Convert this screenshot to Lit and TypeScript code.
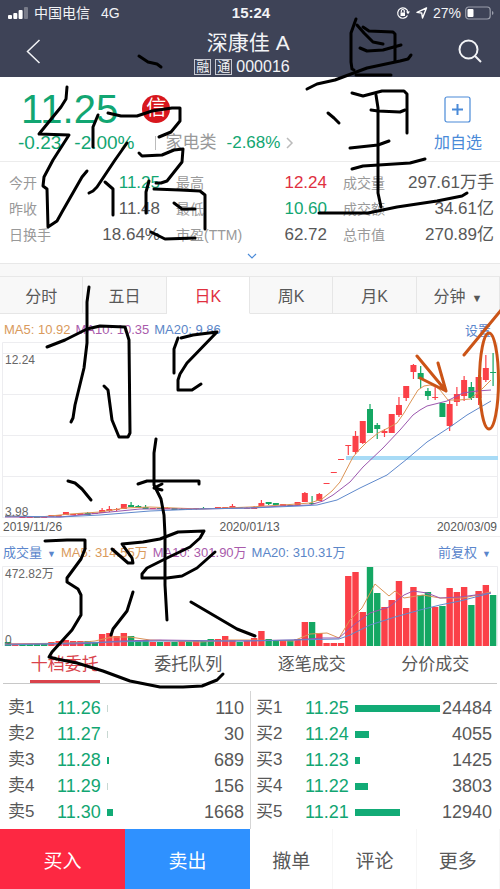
import { LitElement, html, svg, css } from "lit";
import { customElement } from "lit/decorators.js";
import { classMap } from "lit/directives/class-map.js";

type Candle = [up: number, high: number, top: number, bottom: number, low: number];

const PITCH = 7.24;
const FIRST_X = 8;

const CANDLES: Candle[] = [
  [0, 516, 516, 517, 517], [1, 516, 516, 517, 517], [1, 517, 517, 518, 518], [1, 517, 517, 518, 518],
  [0, 517, 517, 518, 518], [1, 517, 517, 518, 518], [1, 515, 515, 517, 517], [1, 515, 515, 517, 517],
  [1, 512, 512, 515, 515], [1, 514, 514, 515, 515], [1, 513, 513, 515, 515], [0, 512, 513, 515, 515],
  [1, 513, 513, 514, 514], [1, 508, 510, 513, 513], [1, 506, 509, 511, 512], [1, 508, 509, 510, 511],
  [1, 504, 504, 509, 509], [0, 502, 505, 507, 507], [0, 505, 506, 508, 508], [0, 505, 507, 509, 509],
  [1, 508, 508, 509, 509], [0, 508, 508, 509, 509], [1, 507, 508, 509, 509], [0, 508, 508, 510, 510],
  [0, 508, 509, 510, 510], [1, 509, 509, 510, 510], [1, 508, 508, 509, 510], [0, 507, 508, 509, 509],
  [0, 508, 508, 509, 509], [1, 507, 507, 508, 508], [1, 507, 507, 508, 508], [1, 504, 506, 508, 508],
  [0, 507, 507, 508, 508], [1, 507, 508, 509, 509], [1, 506, 507, 509, 509], [1, 500, 503, 506, 506],
  [0, 502, 502, 504, 505], [0, 503, 503, 505, 505], [1, 504, 504, 506, 506], [0, 505, 505, 506, 506],
  [1, 502, 502, 505, 506], [1, 492, 493, 502, 502], [0, 496, 503, 504, 504], [1, 493, 494, 501, 501],
  [1, 483, 483, 484, 484], [1, 472, 472, 473, 473], [1, 459, 459, 460, 460], [1, 445, 445, 446, 455],
  [1, 431, 436, 452, 454], [1, 421, 421, 443, 444], [0, 404, 409, 433, 433], [0, 423, 425, 429, 439],
  [1, 429, 431, 433, 437], [1, 414, 414, 433, 433], [1, 397, 405, 415, 417], [1, 386, 386, 398, 401],
  [1, 364, 365, 372, 379], [0, 366, 373, 379, 388], [0, 388, 391, 396, 400], [1, 387, 397, 398, 400],
  [0, 403, 403, 417, 417], [1, 400, 404, 426, 431], [1, 387, 394, 402, 406], [1, 376, 380, 396, 401],
  [0, 382, 387, 398, 400], [1, 375, 377, 398, 405], [1, 355, 368, 380, 382], [0, 353, 372, 373, 386],
];

/** Bar heights; a negative value is a falling day. */
const VOLUMES: number[] = [
  -4, 2, -2, -2, -2, -2, 4, 5, 6, 5, 5, -5, -4, 12, 13, 10, 13, -10, -6, -6, 4, -4, 4, -4, 5, -4, 6,
  -5, -7, 7, 10, 6, -4, 5, 8, 15, -7, -6, 6, -6, 7, 24, -24, 13, 3, 3, 3, 70, 74, 34, -79, -53, 39,
  46, 65, 38, 59, -51, -54, 39, -40, 58, 54, 59, -41, 55, 61, -51,
];

const PRICE_LINES = [
  ["orange", "5,516 40,517 70,514 100,512 125,508 150,507 200,509 250,507 283,505 310,503 322,499 332,491 340,482 353,457 360,449 367,442 378,433 388,428 397,423 404,413 410,403 418,390 424,386 430,385 436,387 440,390 448,400 459,400 470,399 480,391 491,380"],
  ["purple", "5,517 60,517 100,513 140,509 200,509 250,508 283,506 310,505 323,501 333,495 350,482 363,467 383,448 400,430 413,415 420,410 427,406 447,401 463,393 477,391 491,390"],
  ["blue", "5,516 60,517 100,515 150,511 200,509 250,508 300,506 317,505 337,500 360,488 387,475 407,459 427,442 450,427 467,415 491,401"],
];

const VOLUME_LINES = [
  ["orange", "5,644 73,643 95,641 112,637 130,637 150,640 200,642 230,640 250,640 293,641 310,634 327,633 339,638 350,620 362,608 375,584 389,596 395,591 404,598 423,595 440,598 463,598 491,592"],
  ["purple", "5,644 73,644 95,643 120,641 160,640 230,641 293,640 322,638 339,638 355,624 370,613 389,607 404,595 413,591 427,593 440,598 460,597 491,593"],
  ["blue", "5,645 110,642 160,641 250,641 339,639 350,635 370,625 395,617 420,610 440,605 460,601 491,593"],
];

const INK = [
  "139,56 142,58 148,62 157,64 161,67",
  "67,87 66,99 61,107 39,134 69,135 53,160 44,177 43,186 47,189 48,227 57,221 62,212 82,177 87,171",
  "98,115 93,127 93,147",
  "108,113 121,116 137,116 152,111 172,108 180,108 180,121 171,132 159,137",
  "127,143 115,160 103,178 97,187 93,191 89,193",
  "105,182 113,189 113,215",
  "139,153 142,156 162,155 174,150 183,149 182,162 167,181 161,183 156,183",
  "149,181 146,192 146,213",
  "154,189 180,190 200,191 205,195 205,229",
  "174,203 182,209 195,209",
  "151,232 165,239 195,238",
  "356,19 351,33 351,62 352,69 354,70",
  "357,25 364,33 373,42 383,44",
  "363,27 369,31 393,32 395,34 395,61",
  "360,48 367,51 383,50 401,45",
  "307,89 317,84 335,80 367,68 400,61 408,59 411,55",
  "356,75 391,75",
  "328,113 334,118 339,123",
  "352,93 363,96 382,91 404,91 407,94 407,133",
  "376,95 378,108 378,193 381,207",
  "371,110 378,111 400,112 405,110",
  "350,148 378,145 389,141",
  "352,169 363,166 410,163 425,159",
  "319,213 368,213 397,207 437,201 462,196 467,193",
  "89,287 87,302 87,343 84,368 75,405 73,418 71,422",
  "47,347 65,340 87,329 100,326 125,327 129,340 130,433 128,437 119,437 112,420 108,390 104,386",
  "178,338 174,349 174,373",
  "181,338 193,335 217,332 187,363 180,374 178,380 178,390 192,390 201,384",
  "68,481 75,483 82,489 91,500",
  "156,439 154,453 154,485 161,499 164,515 165,535 165,585 167,620",
  "138,484 147,481 199,481 199,484",
  "162,484 154,488 162,490",
  "45,541 67,540 85,540 85,549 81,559 67,578 67,582 78,589 81,595 81,615 72,630 52,652 49,657 57,659 77,663 103,671 130,681 160,687 183,687 202,686 217,680 223,674",
  "112,549 128,563 133,563 132,558 122,544 143,542 160,539 178,532 204,531 200,538 190,547 167,558 147,568 142,574 142,578 167,578 182,576 197,568 215,552",
  "133,592 127,611 113,629 111,635",
  "191,602 237,629 255,636",
];

const SELLS: [string, string, number][] = [
  ["卖1", "11.26", 110], ["卖2", "11.27", 30], ["卖3", "11.28", 689], ["卖4", "11.29", 156], ["卖5", "11.30", 1668],
];
const BUYS: [string, string, number][] = [
  ["买1", "11.25", 24484], ["买2", "11.24", 4055], ["买3", "11.23", 1425], ["买4", "11.22", 3803], ["买5", "11.21", 12940],
];
const MAX_LOT = 24484;

const STATS: [string, string, string][] = [
  ["今开", "11.25", "down"], ["最高", "12.24", "up"], ["成交量", "297.61万手", ""],
  ["昨收", "11.48", ""], ["最低", "10.60", "down"], ["成交额", "34.61亿", ""],
  ["日换手", "18.64%", ""], ["市盈(TTM)", "62.72", ""], ["总市值", "270.89亿", ""],
];

const lines = (set: string[][]) =>
  set.map(([name, points]) => svg`<polyline class="ma ${name}" points=${points}></polyline>`);

@customElement("app-root")
export class AppRoot extends LitElement {
  static styles = css`
    :host {
      display: block;
      position: relative;
      overflow: hidden;
      background: #fff;
      color: #585858;
      font-family: "Liberation Sans", "Noto Sans CJK SC", sans-serif;
      font-weight: 400;
    }
    * { box-sizing: border-box; }
    svg { display: block; }
    button {
      margin: 0;
      padding: 0;
      border: 0;
      background: none;
      font: inherit;
      color: inherit;
      cursor: pointer;
    }
    .up { color: #e0303f; }
    .down { color: #12a672; }

    .status, .header { background: #3e4357; color: #f2f3f6; }
    .status {
      display: grid;
      grid-template-columns: 1fr auto 1fr;
      align-items: center;
      height: 25px;
      padding: 0 6px 0 8px;
      font-size: 14px;
      line-height: 24px;
    }
    .carrier { display: flex; align-items: center; gap: 6px; }
    .network { margin-left: 5px; }
    .clock { font-size: 15px; font-weight: 700; }
    .indicators { display: flex; align-items: center; justify-content: flex-end; gap: 4px; }
    .header {
      display: grid;
      grid-template-columns: 1fr auto 1fr;
      align-items: center;
      height: 52px;
      padding: 0 18px 0 2px;
    }
    .find { justify-self: end; }
    .back { justify-self: start; margin-left: 24px; }
    .title { text-align: right; padding-top: 4px; }
    h1 { margin: 0; font-size: 21px; line-height: 28px; font-weight: 400; }
    .code { display: flex; gap: 4px; align-items: center; font-size: 16px; line-height: 20px; }
    .mark {
      border: 1px solid #c5c8d1;
      font-size: 13px;
      line-height: 14px;
      width: 17px;
      text-align: center;
    }

    .quote {
      display: flex;
      justify-content: space-between;
      padding: 10px 18px 6px;
      border-bottom: 1px solid #ececec;
    }
    .price { display: flex; align-items: center; gap: 24px; padding-left: 3px; height: 44px; }
    .last { font-size: 40px; line-height: 44px; }
    .seal {
      width: 28px;
      height: 28px;
      border-radius: 50%;
      background: #d8161d;
      color: #fff;
      font-size: 20px;
      line-height: 27px;
      text-align: center;
    }
    .change { display: flex; align-items: center; font-size: 19px; line-height: 24px; gap: 13px; }
    .sector {
      display: flex;
      align-items: center;
      gap: 10px;
      color: #999;
      font-size: 17px;
      line-height: 24px;
      margin-left: 7px;
    }
    .sector i { width: 1px; height: 14px; background: #bbb; }
    .sector svg { margin-left: -4px; }
    .add { display: flex; flex-direction: column; align-items: center; gap: 8px; padding-top: 9px; color: #4a8ad8; font-size: 16px; line-height: 24px; }

    .stats { padding: 8px 6px 0 9px; border-bottom: 1px solid #e8e8e8; }
    dl { margin: 0; display: grid; grid-template-columns: repeat(3, 1fr); column-gap: 16px; }
    dl div { display: flex; justify-content: space-between; align-items: center; height: 26px; line-height: 26px; }
    dt { font-size: 14px; color: #999; }
    dd { margin: 0; font-size: 17px; white-space: nowrap; }
    .more { display: block; margin: 0 auto; height: 15px; }

    .gap { background: #f8f8f8; padding-top: 12px; }
    .periods {
      display: grid;
      grid-template-columns: repeat(6, 1fr);
      border-top: 1px solid #e8e8e8;
      font-size: 16px;
    }
    .periods button {
      height: 37px;
      background: #f8f8f8;
      border-right: 1px solid #e6e6e6;
      border-bottom: 1px solid #e6e6e6;
    }
    .periods .on { background: #fff; border-bottom-color: #fff; color: #e0303f; }
    .caret { font-size: 11px; margin-left: 6px; }

    .legend {
      display: flex;
      align-items: center;
      gap: 5px;
      height: 28px;
      padding: 2px 9px 0 4px;
      font-size: 13px;
      white-space: nowrap;
    }
    .legend.vol { height: 29px; padding: 0 9px 0 3px; }
    .legend .caret { font-size: 9px; margin-left: 5px; }
    .legend .end { margin-left: auto; }
    .legend button { color: #5b86cc; }
    .m5 { color: #d99a5c; }
    .m10 { color: #a95bab; }
    .m20 { color: #5b86c8; }
    .chart { position: relative; font-size: 12px; line-height: 16px; color: #666; }
    .chart svg { width: 100%; }
    .top, .bottom { position: absolute; left: 5px; }
    .top { top: 0; }
    .price-chart .top { top: 10px; }
    .bottom { bottom: -2px; }
    .dates {
      display: flex;
      justify-content: space-between;
      padding: 0 3px;
      font-size: 12px;
      line-height: 18px;
      border-bottom: 1px solid #eee;
    }
    .grid { stroke: #ededf0; fill: none; }
    .rise { fill: #fb4048; stroke: none; }
    .fall { fill: #14a763; stroke: none; }
    .ma { fill: none; stroke-width: 1; }
    .ma.orange { stroke: #dc9455; }
    .ma.purple { stroke: #9c57ae; }
    .ma.blue { stroke: #5f89cc; }
    .band { fill: #a8dbf6; }

    .books {
      display: grid;
      grid-template-columns: repeat(4, 1fr);
      margin: 0 3px;
      border-bottom: 1px solid #c8c8c8;
      font-size: 17px;
    }
    .books button { height: 37px; display: flex; flex-direction: column; align-items: center; justify-content: space-between; line-height: 38px; }
    .books .on { color: #d9434c; }
    .books .on::after { content: ""; width: 70px; height: 3px; margin-top: -4px; background: #d9434c; }

    .depth { display: grid; grid-template-columns: 1fr 1fr; padding-top: 7px; }
    table { width: 100%; border-collapse: collapse; table-layout: fixed; }
    td, th { padding: 0; height: 26px; line-height: 26px; font-size: 18px; font-weight: 400; }
    th { text-align: left; font-size: 17px; }
    .side { padding: 4px 6px 4px 8px; }
    .side + .side { padding: 4px 8px 4px 5px; border-left: 1px solid #d5d5d5; }
    .name { width: 49px; }
    .cost { width: 50px; }
    .lot { display: flex; align-items: center; justify-content: space-between; }
    .bar { flex: none; height: 7px; min-width: 1px; background: #12ab76; }
    .bar.thin { background: #c8d8d2; }

    .actions { display: grid; grid-template-columns: repeat(2, 3fr) repeat(3, 2fr); font-size: 19px; }
    .actions button { height: 60px; border-right: 1px solid #f6f6f6; }
    .actions .buy { background: #fd2842; color: #fff; border: 0; }
    .actions .sell { background: #2f91ff; color: #fff; border: 0; }

    .ink { position: absolute; top: 0; left: 0; width: 100%; pointer-events: none; }
    .ink g { fill: none; stroke-linecap: round; stroke-linejoin: round; stroke-width: 3; }
    .pen { stroke: #000; }
    .marker { stroke: #cb5417; }
  `;

  private priceChart() {
    return html`<div class="chart price-chart">
      <svg viewBox="0 342 500 176" aria-label="日K">
        <path class="grid" d="M2.5 518V342.5H497.500V518M2 353.500H497M2 394.500H497M2 435.500H497M2 476.500H497M2 517.500H497"></path>
        <rect class="band" x="346" y="456" width="152" height="4"></rect>
        ${CANDLES.map(([up, high, top, bottom, low], i) => {
          const x = FIRST_X + i * PITCH;
          return svg`<g class=${up ? "rise" : "fall"}>
            <rect x=${x - 0.6} y=${high} width="1.2" height=${low - high}></rect>
            <rect x=${x - 3} y=${top} width="6" height=${bottom - top}></rect></g>`;
        })}
        ${lines(PRICE_LINES)}
      </svg>
      <span class="top">12.24</span><span class="bottom">3.98</span>
    </div>`;
  }

  private volumeChart() {
    return html`<div class="chart">
      <svg viewBox="0 566 500 80" aria-label="成交量">
        <path class="grid" d="M2.5 646V566.500H497.500V646"></path>
        ${VOLUMES.map((v, i) => svg`<rect class=${v > 0 ? "rise" : "fall"} x=${FIRST_X - 3.2 + i * PITCH}
          y=${646 - Math.abs(v)} width="6.4" height=${Math.abs(v)}></rect>`)}
        ${lines(VOLUME_LINES)}
      </svg>
      <span class="top">472.82万</span><span class="bottom">0</span>
    </div>`;
  }

  private side(rows: [string, string, number][]) {
    return html`<div class="side"><table>
      <colgroup><col class="name"><col class="cost"><col></colgroup>
      <tbody>${rows.map(([name, cost, lot]) => html`<tr>
        <th scope="row">${name}</th>
        <td class="down">${cost}</td>
        <td><div class="lot">
          <span class=${classMap({ bar: true, thin: lot < 500 })} style="width:${Math.round((lot / MAX_LOT) * 85)}px"></span>
          <span>${lot}</span>
        </div></td>
      </tr>`)}</tbody>
    </table></div>`;
  }

  render() {
    return html`
      <div class="status">
        <div class="carrier">
          <svg width="20" height="12" viewBox="0 0 20 12" fill="#fff">
            <rect y="8" width="4" height="4" rx="1"></rect><rect x="5.300" y="6" width="4" height="6" rx="1"></rect>
            <rect x="10.600" y="3" width="4" height="9" rx="1"></rect><rect x="16" width="4" height="12" rx="1" opacity=".3"></rect>
          </svg>
          <span>中国电信</span><span class="network">4G</span>
        </div>
        <span class="clock">15:24</span>
        <div class="indicators">
          <svg width="14" height="14" viewBox="0 0 14 14" fill="none" stroke="#fff" stroke-width="1.200">
            <path d="M11.500 9.500A5.200 5.200 0 1 1 12 6"></path><path d="M10 5.500h4l-2 2.800z" fill="#fff" stroke="none"></path>
            <rect x="4.500" y="6.500" width="4.500" height="3.500" fill="#fff" stroke="none"></rect><path d="M5.300 6.500V5a1.500 1.500 0 0 1 3 0v1.500"></path>
          </svg>
          <svg width="15" height="12" viewBox="0 0 15 12" fill="none" stroke="#fff" stroke-width="1.400" stroke-linejoin="round"><path d="M12.500 1L3 5.400l4.700.6.800 5z"></path></svg>
          <span>27%</span>
          <svg width="29" height="14" viewBox="0 0 29 14"><rect x=".7" y="1" width="24.500" height="12" rx="3" fill="none" stroke="#9a9eab" stroke-width="1.200"></rect><rect x="2.500" y="3" width="6" height="8" rx="1" fill="#fff"></rect><path d="M27 5v4q1.500-.6 1.500-2T27 5" fill="#9a9eab"></path></svg>
        </div>
      </div>
      <header class="header">
        <button class="back" aria-label="返回"><svg width="15" height="25" viewBox="0 0 15 25" fill="none" stroke="#f2f3f6" stroke-width="1.500"><path d="M13.500 1L1.500 12.500l12 11.500"></path></svg></button>
        <div class="title">
          <h1>深康佳 A</h1>
          <div class="code"><span class="mark">融</span><span class="mark">通</span><span>000016</span></div>
        </div>
        <button class="find" aria-label="搜索"><svg width="24" height="24" viewBox="0 0 24 24" fill="none" stroke="#f2f3f6" stroke-width="2"><circle cx="10.500" cy="10.500" r="9"></circle><path d="M17 17l6 6"></path></svg></button>
      </header>

      <section class="quote">
        <div>
          <div class="price"><span class="last down">11.25</span><span class="seal">信</span></div>
          <div class="change down">
            <span>-0.23</span><span>-2.00%</span>
            <span class="sector"><i></i><span>家电类</span><span class="down">-2.68%</span>
              <svg width="8" height="14" viewBox="0 0 8 14" fill="none" stroke="#bbb" stroke-width="1.500"><path d="M1 2l5 5-5 5"></path></svg></span>
          </div>
        </div>
        <button class="add">
          <svg width="27" height="27" viewBox="0 0 27 27" fill="none" stroke="#4a8ad8"><rect x="1" y="1" width="25" height="25" rx="2" stroke-width="1.200"></rect><path d="M13.500 8v11M8 13.500h11" stroke-width="2"></path></svg>
          <span>加自选</span>
        </button>
      </section>

      <section class="stats">
        <dl>${STATS.map(([k, v, tone]) => html`<div><dt>${k}</dt><dd class=${tone}>${v}</dd></div>`)}</dl>
        <button class="more" aria-label="展开"><svg width="10" height="6" viewBox="0 0 10 6" fill="none" stroke="#4a8ad8" stroke-width="1.200"><path d="M1 1l4 4 4-4"></path></svg></button>
      </section>

      <div class="gap"><nav class="periods">
        <button>分时</button><button>五日</button><button class="on">日K</button><button>周K</button><button>月K</button>
        <button>分钟<span class="caret">▼</span></button>
      </nav></div>

      <div class="legend">
        <span class="m5">MA5: 10.92</span><span class="m10">MA10: 10.35</span><span class="m20">MA20: 9.86</span>
        <button class="end">设置</button>
      </div>
      ${this.priceChart()}
      <div class="dates"><span>2019/11/26</span><span>2020/01/13</span><span>2020/03/09</span></div>
      <div class="legend vol">
        <button>成交量<span class="caret">▼</span></button>
        <span class="m5">MA5: 314.55万</span><span class="m10">MA10: 301.90万</span><span class="m20">MA20: 310.31万</span>
        <button class="end">前复权<span class="caret">▼</span></button>
      </div>
      ${this.volumeChart()}

      <nav class="books">
        <button class="on">十档委托</button><button>委托队列</button><button>逐笔成交</button><button>分价成交</button>
      </nav>
      <section class="depth">${this.side(SELLS)}${this.side(BUYS)}</section>
      <footer class="actions">
        <button class="buy">买入</button><button class="sell">卖出</button><button>撤单</button><button>评论</button><button>更多</button>
      </footer>

      <svg class="ink" viewBox="0 0 500 889" aria-hidden="true">
        <g class="pen">${INK.map((p) => svg`<polyline points=${p}></polyline>`)}</g>
        <g class="marker">
          <ellipse cx="489" cy="381" rx="9.500" ry="48"></ellipse>
          <path d="M464 355L502 309M417 356L446 391L438 363M420 378L446 391"></path>
        </g>
      </svg>
    `;
  }
}
